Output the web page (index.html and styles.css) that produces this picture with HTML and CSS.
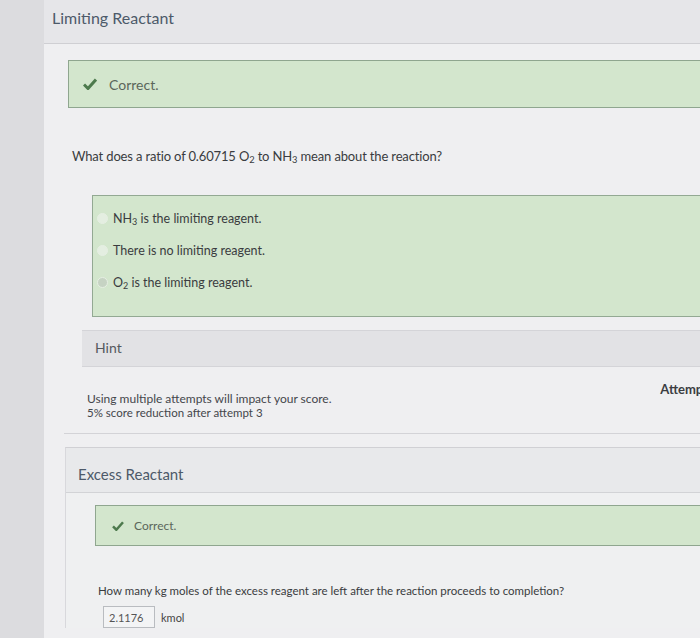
FILE: index.html
```html
<!DOCTYPE html>
<html>
<head>
<meta charset="utf-8">
<link rel="stylesheet" href="styles.css">
</head>
<body>
<div class="outer">
  <div class="sec-head">Limiting Reactant</div>
  <div class="sec-body">
    <div class="correct">
      <svg class="check" width="14" height="12" viewBox="0 0 14 12"><path d="M1 6.5 L5 10.5 L13 1.5" fill="none" stroke="#4d7a4d" stroke-width="3"/></svg>
      <span>Correct.</span>
    </div>
    <p class="question">What does a ratio of 0.60715 O<sub>2</sub> to NH<sub>3</sub> mean about the reaction?</p>
    <div class="answers">
      <div class="opt"><span class="radio"></span><span>NH<sub>3</sub> is the limiting reagent.</span></div>
      <div class="opt"><span class="radio"></span><span>There is no limiting reagent.</span></div>
      <div class="opt"><span class="radio sel"></span><span>O<sub>2</sub> is the limiting reagent.</span></div>
    </div>
    <div class="hint">Hint</div>
    <div class="attempts-row">
      <div class="attempts-info">
        <div>Using multiple attempts will impact your score.</div>
        <div class="small">5% score reduction after attempt 3</div>
      </div>
      <div class="attempt-label">Attempt</div>
    </div>
    <div class="section2">
      <div class="sec2-head">Excess Reactant</div>
      <div class="sec2-body">
        <div class="correct small-correct">
          <svg class="check" width="12" height="10" viewBox="0 0 14 12"><path d="M1 6.5 L5 10.5 L13 1.5" fill="none" stroke="#4d7a4d" stroke-width="3"/></svg>
          <span>Correct.</span>
        </div>
        <p class="question2">How many kg moles of the excess reagent are left after the reaction proceeds to completion?</p>
        <div class="input-row">
          <span class="input">2.1176</span>
          <span class="unit">kmol</span>
        </div>
      </div>
    </div>
  </div>
</div>
</body>
</html>
```

FILE: styles.css
```css
html, body {
  margin: 0;
  padding: 0;
}
body {
  width: 700px;
  height: 638px;
  overflow: hidden;
  background: #dcdcdf;
  font-family: Lato, "Open Sans", sans-serif;
  color: #3d3f44;
}
.outer {
  margin-left: 44px;
  background: #efeff1;
  height: 638px;
  overflow: hidden;
}
.sec-head {
  height: 44px;
  box-sizing: border-box;
  padding: 8px 0 0 8px;
  font-size: 16px;
  color: #4d5a69;
  background: #e6e6e9;
  border-bottom: 1px solid #cfcfd3;
}
.sec-body {
  padding: 16px 0 0 24px;
}
.correct {
  height: 48px;
  box-sizing: border-box;
  display: flex;
  align-items: center;
  gap: 12px;
  padding-left: 14px;
  background: #d3e6cd;
  border: 1px solid #8fa68f;
  border-right: none;
  font-size: 14px;
  color: #5b665b;
}
.check { flex: none; }
.question {
  margin: 40px 0 0 4px;
  font-size: 13px;
  letter-spacing: -0.15px;
  color: #3a3c40;
}
sub {
  font-size: 0.72em;
  vertical-align: -0.25em;
  line-height: 0;
}
.answers {
  margin: 31px 0 0 24px;
  height: 122px;
  box-sizing: border-box;
  background: #d3e6cd;
  border: 1px solid #93a993;
  border-right: none;
  padding: 14px 0 0 4px;
  display: flex;
  flex-direction: column;
  gap: 15px;
}
.opt {
  display: flex;
  align-items: center;
  gap: 5px;
  font-size: 12.5px;
  color: #3a3c40;
  height: 17px;
}
.radio {
  width: 9px;
  height: 9px;
  border-radius: 50%;
  border: 1px solid #e6efe3;
  background: #e4eee1;
}
.radio.sel {
  background: #c6d3c3;
}
.hint {
  margin: 13px 0 0 14px;
  height: 37px;
  box-sizing: border-box;
  padding: 8px 0 0 13px;
  background: #e2e2e5;
  border-top: 1px solid #d4d4d8;
  border-bottom: 1px solid #d4d4d8;
  font-size: 14px;
  color: #55585e;
}
.attempts-row {
  display: flex;
  justify-content: space-between;
  margin: 0 0 0 -4px;
  padding-left: 23px;
  height: 67px;
  box-sizing: border-box;
  border-bottom: 1px solid #d3d3d7;
}
.attempts-info {
  padding-top: 25px;
  font-size: 12px;
  color: #44464b;
  line-height: 14px;
}
.attempts-info .small {
  font-size: 11.5px;
}
.attempt-label {
  font-size: 13px;
  font-weight: bold;
  color: #3b3d42;
  padding-top: 14px;
  margin-right: -8px;
}
.section2 {
  margin: 13px 0 0 -3px;
  border-top: 1px solid #d0d0d4;
  border-left: 1px solid #d8d8dc;
  background: #eff0f1;
}
.sec2-head {
  height: 45px;
  box-sizing: border-box;
  padding: 17px 0 0 12px;
  font-size: 15px;
  color: #4d5a69;
  background: #e8e9eb;
  border-bottom: 1px solid #d2d3d6;
}
.sec2-body {
  padding: 12px 0 0 29px;
}
.small-correct {
  height: 41px;
  font-size: 12px;
  gap: 10px;
  padding-left: 16px;
}
.question2 {
  margin: 38px 0 0 3px;
  font-size: 11.5px;
  color: #3a3c40;
}
.input-row {
  display: flex;
  align-items: center;
  gap: 6px;
  margin: 9px 0 0 8px;
}
.input {
  width: 52px;
  height: 22px;
  box-sizing: border-box;
  border: 1px solid #b9bcc0;
  background: #f3f4f5;
  font-size: 11px;
  color: #555;
  padding: 4px 0 0 5px;
}
.unit {
  font-size: 11px;
  color: #444;
}
```
